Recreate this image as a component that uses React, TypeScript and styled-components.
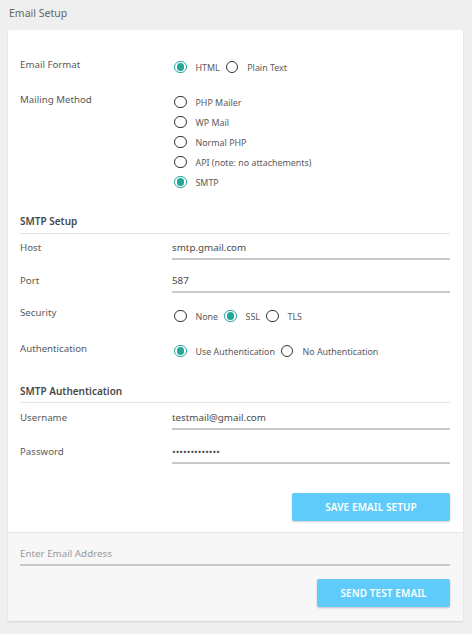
import styled, { createGlobalStyle } from "styled-components";

const GlobalStyle = createGlobalStyle`
  html, body {
    margin: 0;
    padding: 0;
    background: #ffffff;
  }
  body {
    font-family: "Noto Sans", "Open Sans", sans-serif;
    -webkit-font-smoothing: antialiased;
  }
  * {
    box-sizing: border-box;
  }
`;

const Panel = styled.div`
  width: 472px;
  background: #efefef;
  padding: 0 9px 13px 8px;
`;

const PanelTitle = styled.div`
  height: 30px;
  padding: 6px 0 0 1px;
  font-size: 10.5px;
  line-height: 14px;
  color: #666;
`;

const Card = styled.div`
  background: #ffffff;
  border-radius: 2px;
  box-shadow: 0 1px 2px rgba(0, 0, 0, 0.12);
  overflow: hidden;
`;

const CardBody = styled.div`
  padding: 25px 13px 11px 12px;
`;

const Row = styled.div<{ $mt?: number }>`
  display: grid;
  grid-template-columns: 152px 1fr;
  margin-top: ${(p) => p.$mt ?? 0}px;
`;

const Label = styled.div`
  font-size: 9.7px;
  line-height: 20px;
  color: #5a5a5a;
`;

const RadioGroup = styled.div<{ $column?: boolean; $pt?: number }>`
  display: flex;
  flex-direction: ${(p) => (p.$column ? "column" : "row")};
  align-items: ${(p) => (p.$column ? "flex-start" : "center")};
  padding: ${(p) => p.$pt ?? 2}px 0 0 2px;
`;

const Option = styled.label`
  display: flex;
  align-items: center;
  height: 20px;
  margin-right: 6px;
  font-size: 8.9px;
  color: #5a5a5a;
`;

const Radio = styled.input.attrs({ type: "radio", readOnly: true })`
  appearance: none;
  width: 12.5px;
  height: 12.5px;
  margin: 0 9px 0 0;
  border-radius: 50%;
  border: 1.8px solid #333;
  background: #fff;
  position: relative;

  &:checked {
    border-color: #26a69a;
  }
  &:checked::after {
    content: "";
    position: absolute;
    inset: 1.6px;
    border-radius: 50%;
    background: #26a69a;
  }
`;

const Heading = styled.div<{ $mt: number; $pb: number }>`
  margin-top: ${(p) => p.$mt}px;
  padding-bottom: ${(p) => p.$pb}px;
  border-bottom: 1px solid #e3e3e3;
  font-size: 10px;
  font-weight: 600;
  line-height: 20px;
  color: #484848;
`;

const TextInput = styled.input`
  display: block;
  width: 100%;
  height: 22px;
  padding: 0 0 2px 0;
  border: none;
  border-bottom: 2px solid #c9c9c9;
  background: transparent;
  outline: none;
  font-family: inherit;
  font-size: 9.8px;
  color: #4a4a4a;

  &::placeholder {
    color: #9a9a9a;
  }
`;

const Actions = styled.div<{ $mt: number }>`
  display: flex;
  justify-content: flex-end;
  margin-top: ${(p) => p.$mt}px;
`;

const Button = styled.button<{ $w: number }>`
  width: ${(p) => p.$w}px;
  height: 28px;
  border: none;
  border-radius: 2px;
  background: #5ecbfa;
  box-shadow: 0 1px 2px rgba(0, 0, 0, 0.22);
  color: #fff;
  font-family: inherit;
  font-size: 10px;
  font-weight: 600;
  letter-spacing: 0.1px;
  cursor: pointer;
`;

const Footer = styled.div`
  background: #f7f7f7;
  border-top: 1px solid #e6e6e6;
  padding: 11px 13px 14px 12px;
`;

function App() {
  return (
    <>
      <GlobalStyle />
      <Panel>
        <PanelTitle>Email Setup</PanelTitle>
        <Card>
          <CardBody>
            <Row>
              <Label>Email Format</Label>
              <RadioGroup $pt={2}>
                <Option>
                  <Radio name="format" defaultChecked />
                  HTML
                </Option>
                <Option>
                  <Radio name="format" />
                  Plain Text
                </Option>
              </RadioGroup>
            </Row>
            <Row $mt={13}>
              <Label>Mailing Method</Label>
              <RadioGroup $column $pt={2}>
                <Option>
                  <Radio name="method" />
                  PHP Mailer
                </Option>
                <Option>
                  <Radio name="method" />
                  WP Mail
                </Option>
                <Option>
                  <Radio name="method" />
                  Normal PHP
                </Option>
                <Option>
                  <Radio name="method" />
                  API (note: no attachements)
                </Option>
                <Option>
                  <Radio name="method" defaultChecked />
                  SMTP
                </Option>
              </RadioGroup>
            </Row>

            <Heading $mt={19} $pb={2}>SMTP Setup</Heading>
            <Row $mt={4}>
              <Label>Host</Label>
              <TextInput defaultValue="smtp.gmail.com" />
            </Row>
            <Row $mt={11}>
              <Label>Port</Label>
              <TextInput defaultValue="587" />
            </Row>
            <Row $mt={10}>
              <Label>Security</Label>
              <RadioGroup $pt={3}>
                <Option>
                  <Radio name="security" />
                  None
                </Option>
                <Option>
                  <Radio name="security" defaultChecked />
                  SSL
                </Option>
                <Option>
                  <Radio name="security" />
                  TLS
                </Option>
              </RadioGroup>
            </Row>
            <Row $mt={13}>
              <Label>Authentication</Label>
              <RadioGroup $pt={2}>
                <Option>
                  <Radio name="auth" defaultChecked />
                  Use Authentication
                </Option>
                <Option>
                  <Radio name="auth" />
                  No Authentication
                </Option>
              </RadioGroup>
            </Row>

            <Heading $mt={20} $pb={1}>SMTP Authentication</Heading>
            <Row $mt={5}>
              <Label>Username</Label>
              <TextInput defaultValue="testmail@gmail.com" />
            </Row>
            <Row $mt={12}>
              <Label>Password</Label>
              <TextInput type="password" defaultValue="testpassword1" />
            </Row>

            <Actions $mt={29}>
              <Button $w={158}>SAVE EMAIL SETUP</Button>
            </Actions>
          </CardBody>
          <Footer>
            <TextInput placeholder="Enter Email Address" />
            <Actions $mt={13}>
              <Button $w={133}>SEND TEST EMAIL</Button>
            </Actions>
          </Footer>
        </Card>
      </Panel>
    </>
  );
}

export default App;
